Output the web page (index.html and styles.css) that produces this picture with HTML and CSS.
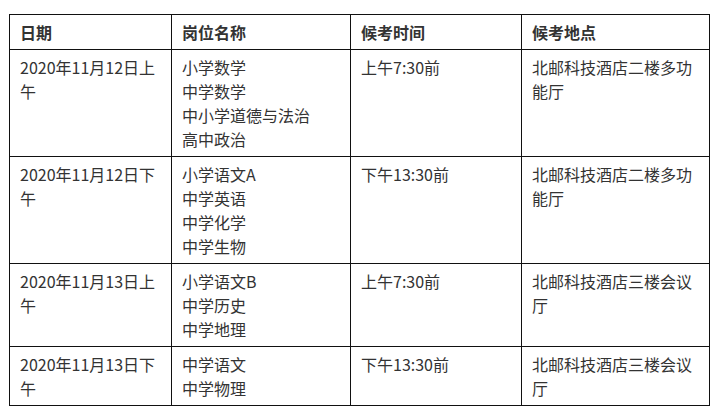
FILE: index.html
```html
<!DOCTYPE html>
<html lang="zh-CN">
<head>
<meta charset="utf-8">
<title>候考安排</title>
<link rel="stylesheet" href="styles.css">
</head>
<body>
<table class="schedule">
  <colgroup>
    <col class="c-date">
    <col class="c-post">
    <col class="c-time">
    <col class="c-place">
  </colgroup>
  <thead>
    <tr>
      <th>日期</th>
      <th>岗位名称</th>
      <th>候考时间</th>
      <th>候考地点</th>
    </tr>
  </thead>
  <tbody>
    <tr>
      <td>2020年11月12日上午</td>
      <td>小学数学<br>中学数学<br>中小学道德与法治<br>高中政治</td>
      <td>上午7:30前</td>
      <td>北邮科技酒店二楼多功能厅</td>
    </tr>
    <tr>
      <td>2020年11月12日下午</td>
      <td>小学语文A<br>中学英语<br>中学化学<br>中学生物</td>
      <td>下午13:30前</td>
      <td>北邮科技酒店二楼多功能厅</td>
    </tr>
    <tr>
      <td>2020年11月13日上午</td>
      <td>小学语文B<br>中学历史<br>中学地理</td>
      <td>上午7:30前</td>
      <td>北邮科技酒店三楼会议厅</td>
    </tr>
    <tr>
      <td>2020年11月13日下午</td>
      <td>中学语文<br>中学物理</td>
      <td>下午13:30前</td>
      <td>北邮科技酒店三楼会议厅</td>
    </tr>
  </tbody>
</table>
</body>
</html>
```

FILE: styles.css
```css
html, body {
  margin: 0;
  padding: 0;
  background: #fff;
}

body {
  font-family: "Noto Sans CJK SC", "Noto Sans", "Liberation Sans", sans-serif;
  font-size: 16px;
  line-height: 24px;
  color: #333;
}

.schedule {
  margin: 14px 0 0 9px;
  width: 700px;
  table-layout: fixed;
  border-collapse: collapse;
  border: 1px solid #111;
}

.c-date { width: 162px; }
.c-post { width: 179px; }
.c-time { width: 171px; }
.c-place { width: 188px; }

.schedule th,
.schedule td {
  border: 1px solid #111;
  padding: 5px 10px;
  text-align: left;
  vertical-align: top;
  word-break: break-all;
}

.schedule th {
  font-weight: bold;
  color: #333;
}
```
